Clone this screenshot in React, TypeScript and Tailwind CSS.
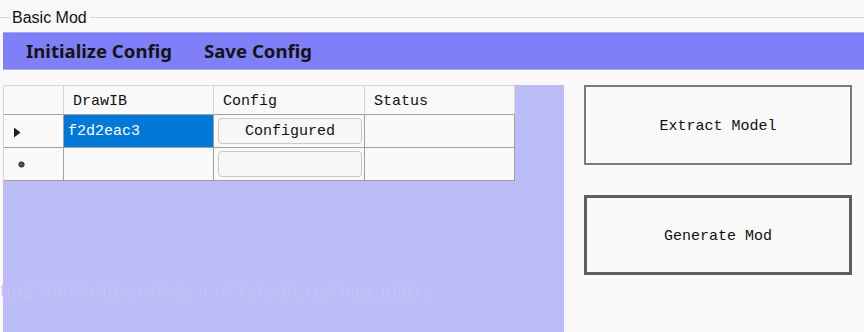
const mono = { fontFamily: '"Liberation Mono", "DejaVu Sans Mono", monospace' };

function Arrow() {
  return (
    <svg width="8" height="11" viewBox="0 0 8 11">
      <path d="M1 0.5 L7.5 5.5 L1 10.5 Z" fill="#1e1e1e" />
    </svg>
  );
}

function NewRowMark() {
  return (
    <svg width="7" height="7" viewBox="0 0 7 7">
      <circle cx="3.5" cy="3.5" r="3" fill="#3a3a3a" />
      <path d="M3.5 0.5 V6.5 M0.5 3.5 H6.5" stroke="#555" strokeWidth="1" />
    </svg>
  );
}

function CellButton({ label }: { label?: string }) {
  return (
    <div className="ml-[4px] mr-[2px] mt-[3px] mb-[2px] flex-1 h-[26px] rounded-[4px] border border-[#c9c9c9] bg-[#f7f7f7] flex items-center justify-center pt-[3px] text-[15px] text-[#111]">
      {label}
    </div>
  );
}

function Grid() {
  const head = 'h-[29px] border-r border-b border-r-[#d6d6d6] border-b-[#a0a0a0] bg-[#f9f9f9] flex items-center pl-[9px] pt-[4px] text-[15px] text-[#111]';
  const cell = 'h-[33px] border-r border-b border-[#a0a0a0] bg-[#f9f9f9] flex';
  return (
    <div
      className="grid grid-cols-[60px_150px_151px_150px] w-[511px] border-l border-t border-[#d6d6d6]"
      style={mono}
    >
      <div className={head} />
      <div className={head}>DrawIB</div>
      <div className={head}>Config</div>
      <div className={head}>Status</div>

      <div className={`${cell} items-center pl-[9px] pt-[2px]`}>
        <Arrow />
      </div>
      <div className={cell}>
        <div className="flex-1 bg-[#0078d7] text-white text-[15px] pl-[4px] pt-[3px] flex items-center">f2d2eac3</div>
      </div>
      <div className={cell}>
        <CellButton label="Configured" />
      </div>
      <div className={cell} />

      <div className={`${cell} items-center pl-[14px]`}>
        <NewRowMark />
      </div>
      <div className={cell} />
      <div className={cell}>
        <CellButton />
      </div>
      <div className={cell} />
    </div>
  );
}

export default function App() {
  return (
    <div className="relative w-[864px] h-[332px] overflow-hidden bg-[#f9f9f9]">
      <div className="flex h-[32px] items-start">
        <div className="mt-[17px] h-px w-[10px] bg-[#d8d8d8]" />
        <span
          className="ml-[2px] mr-[3px] mt-[9px] text-[16px] leading-[18px] text-[#111]"
          style={{ fontFamily: '"Liberation Sans", Arial, sans-serif' }}
        >
          Basic Mod
        </span>
        <div className="mt-[17px] h-px flex-1 bg-[#d8d8d8]" />
      </div>

      <div
        className="ml-[3px] h-[38px] bg-[#7f7ff8] border-y border-[#a9a9fa] flex items-center gap-[32px] pl-[23px] text-[18.6px] font-bold text-[#141414]"
        style={{ fontFamily: '"Noto Sans", "Open Sans", sans-serif' }}
      >
        <span>Initialize Config</span>
        <span>Save Config</span>
      </div>

      <div className="mt-[15px] flex h-[247px]">
        <div className="ml-[3px] w-[561px] bg-[#bcbcf6]">
          <Grid />
        </div>
        <div className="flex-1 pl-[20px] pr-[12px] flex flex-col gap-[30px]" style={mono}>
          <div className="h-[80px] border-2 border-[#7a7a7a] flex items-center justify-center pt-[4px] text-[15px] text-[#111]">
            Extract Model
          </div>
          <div className="h-[80px] border-[3px] border-[#5f5f5f] flex items-center justify-center pt-[5px] text-[15px] text-[#111]">
            Generate Mod
          </div>
        </div>
      </div>

      <div
        className="absolute left-0 top-[276px] text-[18.3px] text-[#c2c2f8] whitespace-nowrap"
        style={{ fontFamily: '"Open Sans", "Noto Sans", sans-serif' }}
      >
        ting your stuffs. Export it by clicking the pink mark.
      </div>
    </div>
  );
}
